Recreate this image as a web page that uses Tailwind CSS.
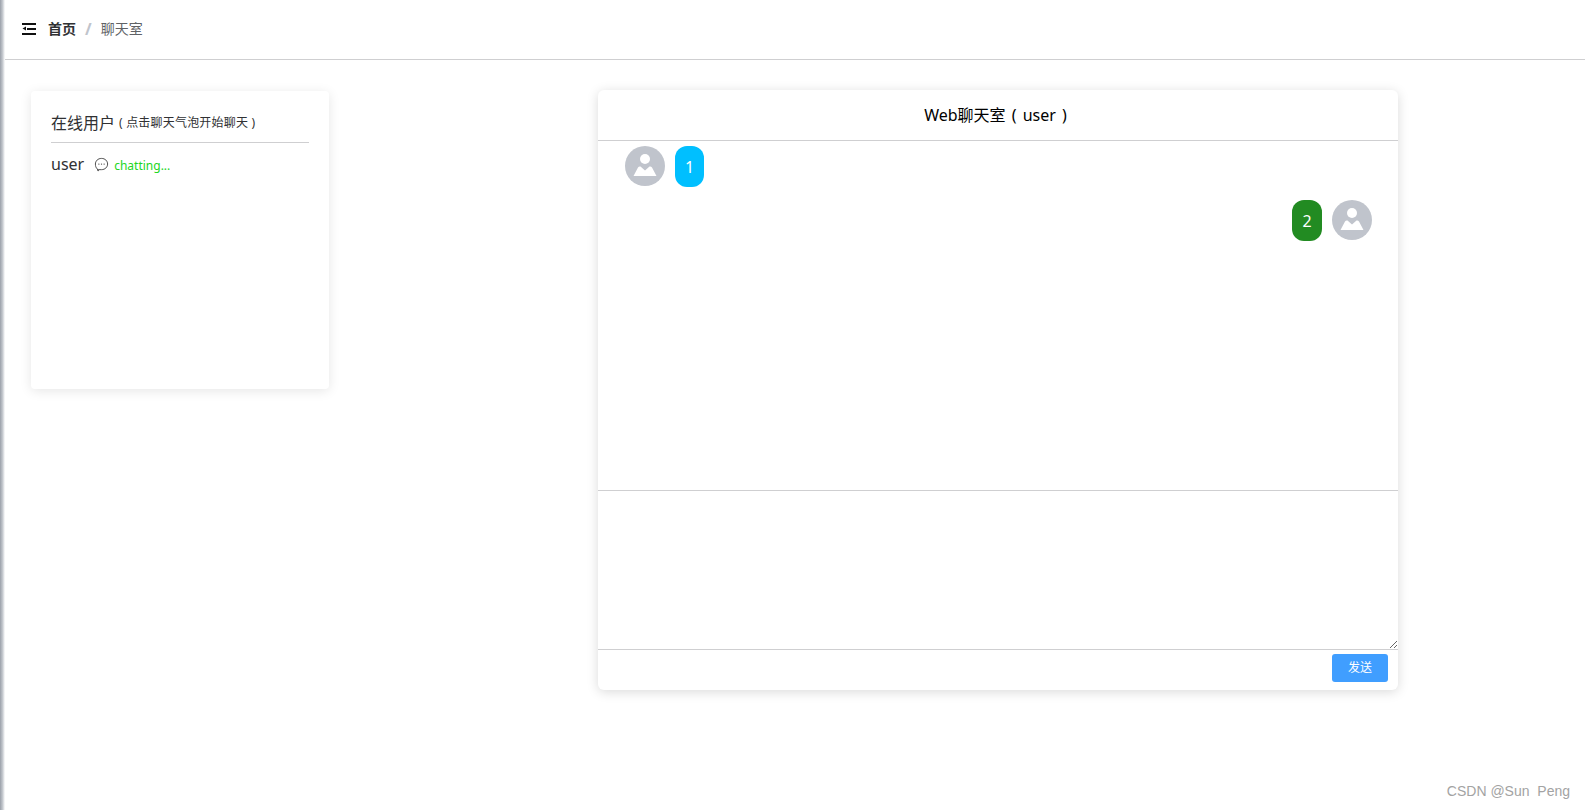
<!DOCTYPE html>
<html lang="zh">
  <head>
    <meta charset="UTF-8" />
    <title>聊天室</title>
    <script src="https://cdn.jsdelivr.net/npm/@tailwindcss/browser@4"></script>
  </head>
  <body class="h-[810px] overflow-hidden bg-white font-['Noto_Sans','Noto_Sans_CJK_SC',sans-serif] text-[#303133]">
    <div class="relative flex h-[810px]">
      <!-- sidebar edge -->
      <div class="w-[5px] shrink-0 bg-gradient-to-r from-[#9aa0a9] via-[#c3c7cd] to-white"></div>

      <div class="flex min-w-0 flex-1 flex-col">
        <!-- breadcrumb -->
        <header class="flex h-[60px] shrink-0 items-center border-b border-[#cfcfd1] pb-[2px] pl-[17px] text-sm">
          <svg class="h-[14px] w-[14px]" viewBox="0 0 14 14" fill="#111">
            <rect x="0" y="1" width="14" height="2" />
            <rect x="5" y="6" width="9" height="2" />
            <rect x="0" y="11" width="14" height="2" />
            <path d="M4 4.500v4L0.500 6.500z" />
          </svg>
          <span class="ml-[12px] font-bold text-[#303133]">首页</span>
          <span class="mx-[9px] text-base font-bold text-[#c0c4cc]">/</span>
          <span class="text-[#606266]">聊天室</span>
        </header>

        <main class="flex flex-1 items-start pt-[31px]">
          <!-- online users -->
          <section class="ml-[26px] h-[298px] w-[298px] shrink-0 rounded bg-white px-5 pt-[14px] shadow-[0_2px_12px_0_rgba(0,0,0,0.1)]">
            <div class="flex h-[38px] items-center border-b border-[#cfcfd1] pb-[2px] text-base leading-none">
              <span>在线用户</span>
              <span class="ml-1 text-xs tracking-[0.2px] whitespace-pre">( 点击聊天气泡开始聊天 )</span>
            </div>
            <div class="mt-[9px] flex items-center">
              <span class="text-base leading-6">user</span>
              <svg class="ml-[10px] h-[15px] w-[15px]" viewBox="0 0 16 16" fill="none" stroke="#444" stroke-width="1">
                <path d="M8 1.500c3.800 0 6.500 2.700 6.500 6s-2.700 6-6.500 6H4.500v1.500l-1-2.300C2 11.500 1.500 9.500 1.500 7.500c0-3.300 2.700-6 6.500-6z" />
                <circle cx="5.200" cy="7.500" r="0.700" fill="#444" stroke="none" />
                <circle cx="8" cy="7.500" r="0.700" fill="#444" stroke="none" />
                <circle cx="10.800" cy="7.500" r="0.700" fill="#444" stroke="none" />
              </svg>
              <span class="mt-[3px] ml-[5px] text-xs text-[#22d622]">chatting...</span>
            </div>
          </section>

          <!-- chat window -->
          <section class="-mt-px ml-[269px] flex h-[600px] w-[800px] shrink-0 flex-col overflow-hidden rounded-md bg-white shadow-[0_2px_12px_0_rgba(0,0,0,0.15)]">
            <div class="flex h-[51px] shrink-0 items-center justify-center border-b border-[#cfcfd1] pr-[5px] text-base [word-spacing:2px] text-black">Web聊天室 ( user )</div>

            <div class="h-[350px] shrink-0 space-y-[13px] border-b border-[#cfcfd1] pt-[5px] pr-[26px] pl-[27px]">
              <div class="flex gap-[10px]">
                <svg class="h-10 w-10" viewBox="0 0 40 40">
                  <circle cx="20" cy="20" r="20" fill="#c0c4cc" />
                  <circle cx="20" cy="13" r="5" fill="#fff" />
                  <path d="M8.500 30L13 21.500q1-1.500 2.500-1L20 24.500l4.500-4q1.500-.500 2.500 1L31.500 30z" fill="#fff" />
                </svg>
                <div class="flex h-[41px] w-[29px] items-center justify-center rounded-xl bg-[#00bfff] text-base text-white">1</div>
              </div>
              <div class="flex justify-end gap-[10px]">
                <div class="flex h-[41px] w-[30px] items-center justify-center rounded-xl bg-[#228b22] text-base text-white">2</div>
                <svg class="h-10 w-10" viewBox="0 0 40 40">
                  <circle cx="20" cy="20" r="20" fill="#c0c4cc" />
                  <circle cx="20" cy="13" r="5" fill="#fff" />
                  <path d="M8.500 30L13 21.500q1-1.500 2.500-1L20 24.500l4.500-4q1.500-.500 2.500 1L31.500 30z" fill="#fff" />
                </svg>
              </div>
            </div>

            <textarea class="block h-[159px] w-full shrink-0 border-b border-[#cfcfd1] outline-none"></textarea>

            <div class="flex flex-1 justify-end pt-[4px] pr-[10px]">
              <button class="h-[28px] w-[56px] rounded-[3px] bg-[#409eff] text-xs text-white">发送</button>
            </div>
          </section>
        </main>
      </div>

      <!-- watermark -->
      <div class="absolute right-[15px] bottom-[9px] font-['Liberation_Sans',sans-serif] text-sm whitespace-pre text-[#a3a3a3]">CSDN @Sun  Peng</div>
    </div>
  </body>
</html>
